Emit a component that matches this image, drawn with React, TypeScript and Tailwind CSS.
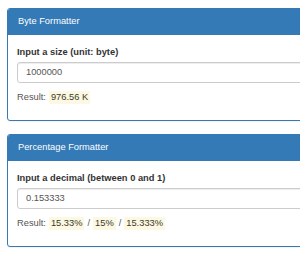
import React from "react";

function Panel({
  title,
  label,
  value,
  results,
}: {
  title: string;
  label: string;
  value: string;
  results: string[];
}) {
  return (
    <div className="w-[340px] min-w-[340px] shrink-0 border border-[#337ab7] rounded-[3px] bg-white shadow-[0_1px_1px_rgba(0,0,0,0.05)] overflow-hidden">
      <div className="h-[26px] bg-[#337ab7] text-white text-[9.3px] flex items-center px-[10px]">
        {title}
      </div>
      <div className="px-[9px] pt-[11px] pb-[16px]">
        <div className="font-bold text-[9.3px] leading-[13px] text-[#333] mb-[3px]">{label}</div>
        <div className="h-[21px] border border-[#ccc] rounded-[3px] flex items-center px-[8px] text-[9.3px] text-[#555] shadow-[inset_0_1px_1px_rgba(0,0,0,0.075)]">
          {value}
        </div>
        <div className="mt-[8px] text-[9.3px] leading-[13px] text-[#555] flex items-center">
          <span>Result:</span>
          <span className="ml-[3px] flex items-center">
            {results.map((r, i) => (
              <React.Fragment key={i}>
                {i > 0 && <span className="mx-[3px]">/</span>}
                <span className="bg-[#fcf8e3] text-[#3a3a2a] px-[2px]">{r}</span>
              </React.Fragment>
            ))}
          </span>
        </div>
      </div>
    </div>
  );
}

export default function App() {
  return (
    <div
      className="w-[300px] h-[256px] overflow-hidden bg-white pl-[7px] pt-[8px] flex flex-col items-start gap-[13px]"
      style={{ fontFamily: '"Liberation Sans", Arial, sans-serif' }}
    >
      <Panel
        title="Byte Formatter"
        label="Input a size (unit: byte)"
        value="1000000"
        results={["976.56 K"]}
      />
      <Panel
        title="Percentage Formatter"
        label="Input a decimal (between 0 and 1)"
        value="0.153333"
        results={["15.33%", "15%", "15.333%"]}
      />
    </div>
  );
}
